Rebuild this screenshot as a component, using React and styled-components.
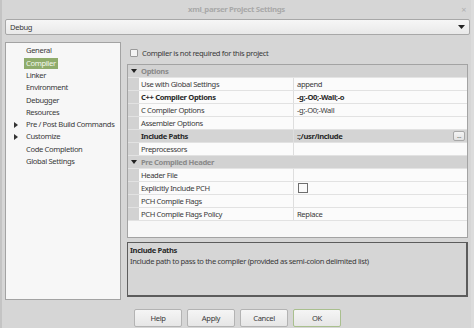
import React from "react";
import styled, { createGlobalStyle } from "styled-components";

const GlobalStyle = createGlobalStyle`
  html, body {
    margin: 0;
    padding: 0;
    background: #dcdcdc;
  }
  * {
    box-sizing: border-box;
  }
`;

const sideItems = [
  { label: "General" },
  { label: "Compiler", selected: true },
  { label: "Linker" },
  { label: "Environment" },
  { label: "Debugger" },
  { label: "Resources" },
  { label: "Pre / Post Build Commands", arrow: true },
  { label: "Customize", arrow: true },
  { label: "Code Completion" },
  { label: "Global Settings" },
];

const groups = [
  {
    title: "Options",
    rows: [
      { name: "Use with Global Settings", value: "append" },
      { name: "C++ Compiler Options", value: "-g;-O0;-Wall;-o", bold: true },
      { name: "C Compiler Options", value: "-g;-O0;-Wall" },
      { name: "Assembler Options", value: "" },
      { name: "Include Paths", value: ":;/usr/include", bold: true, selected: true, more: true },
      { name: "Preprocessors", value: "" },
    ],
  },
  {
    title: "Pre Compiled Header",
    rows: [
      { name: "Header File", value: "" },
      { name: "Explicitly Include PCH", check: true },
      { name: "PCH Compile Flags", value: "" },
      { name: "PCH Compile Flags Policy", value: "Replace" },
    ],
  },
];

function App() {
  return (
    <>
      <GlobalStyle />
      <Window>
        <TitleBar>
          <Title>xml_parser Project Settings</Title>
          <Close>×</Close>
        </TitleBar>
        <Select>
          <span>Debug</span>
          <svg width="7" height="4" viewBox="0 0 7 4">
            <path d="M0 0 L7 0 L3.5 4 Z" fill="#222" />
          </svg>
        </Select>
        <Body>
          <Sidebar>
            {sideItems.map((item) => (
              <SideItem key={item.label}>
                <Arrow>
                  {item.arrow && (
                    <svg width="4" height="6" viewBox="0 0 4 6">
                      <path d="M0 0 L4 3 L0 6 Z" fill="#333" />
                    </svg>
                  )}
                </Arrow>
                <SideLabel $selected={item.selected}>{item.label}</SideLabel>
              </SideItem>
            ))}
          </Sidebar>
          <Main>
            <CheckRow>
              <CheckBox />
              <span>Compiler is not required for this project</span>
            </CheckRow>
            <Grid>
              {groups.map((g) => (
                <React.Fragment key={g.title}>
                  <Category>
                    <CatArrow>
                      <svg width="6" height="4" viewBox="0 0 6 4">
                        <path d="M0 0 L6 0 L3 4 Z" fill="#222" />
                      </svg>
                    </CatArrow>
                    {g.title}
                  </Category>
                  {g.rows.map((r) => (
                    <Row key={r.name} $selected={r.selected}>
                      <Gutter />
                      <NameCell $bold={r.bold}>{r.name}</NameCell>
                      <ValueCell $bold={r.bold}>
                        {r.check ? <SmallCheck /> : <span>{r.value}</span>}
                        {r.more && <MoreBtn>...</MoreBtn>}
                      </ValueCell>
                    </Row>
                  ))}
                </React.Fragment>
              ))}
            </Grid>
            <Desc>
              <DescTitle>Include Paths</DescTitle>
              <DescText>
                Include path to pass to the compiler (provided as semi-colon delimited list)
              </DescText>
            </Desc>
          </Main>
        </Body>
        <Buttons>
          <Button>Help</Button>
          <Button>Apply</Button>
          <Button>Cancel</Button>
          <Button $primary>OK</Button>
        </Buttons>
      </Window>
    </>
  );
}

export default App;

const Window = styled.div`
  width: 471px;
  height: 328px;
  background: #d6d6d6;
  border-left: 2px solid #c4c4c4;
  font-family: "Noto Sans", "DejaVu Sans", sans-serif;
  font-size: 7.6px;
  letter-spacing: -0.35px;
  color: #3a3a3a;
  display: flex;
  flex-direction: column;
  overflow: hidden;
`;

const TitleBar = styled.div`
  height: 17px;
  display: flex;
  align-items: center;
  justify-content: center;
  position: relative;
`;

const Title = styled.div`
  color: #a9a9a9;
  font-weight: bold;
  font-size: 7.8px;
`;

const Close = styled.div`
  position: absolute;
  right: 5px;
  top: 3px;
  color: #b0b0b0;
  font-size: 9px;
`;

const Select = styled.div`
  margin: 2px 1px 0 3px;
  height: 16px;
  border: 1px solid #a8a8a8;
  border-radius: 2px;
  background: linear-gradient(#f6f6f6, #e9e9e9);
  display: flex;
  align-items: center;
  justify-content: space-between;
  padding: 0 4px 0 4px;
`;

const Body = styled.div`
  margin-top: 7px;
  height: 258px;
  display: flex;
  padding-left: 3px;
  gap: 6px;
`;

const Sidebar = styled.div`
  width: 116px;
  height: 258px;
  background: #f7f7f7;
  border: 1px solid #a3a3a3;
  padding-top: 2px;
`;

const SideItem = styled.div`
  height: 12.3px;
  display: flex;
  align-items: center;
`;

const Arrow = styled.div`
  width: 18px;
  padding-left: 8px;
  display: flex;
  align-items: center;
`;

const SideLabel = styled.div`
  padding: 1px 2px;
  line-height: 9.5px;
  background: ${(p) => (p.$selected ? "#8fac6c" : "transparent")};
  color: ${(p) => (p.$selected ? "#f4f8ee" : "#3a3a3a")};
`;

const Main = styled.div`
  width: 341px;
  display: flex;
  flex-direction: column;
`;

const CheckRow = styled.div`
  height: 22px;
  display: flex;
  align-items: center;
  gap: 4px;
  padding-left: 3px;
`;

const CheckBox = styled.div`
  width: 8px;
  height: 8px;
  border: 1px solid #9a9a9a;
  background: #f4f4f4;
  border-radius: 1px;
`;

const Grid = styled.div`
  height: 174px;
  border: 1px solid #a3a3a3;
  background: #f8f8f8;
`;

const Category = styled.div`
  height: 13px;
  display: flex;
  align-items: center;
  background: #d2d2d2;
  color: #8a8a8a;
  font-weight: bold;
  border-bottom: 1px solid #e4e4e4;
`;

const CatArrow = styled.div`
  width: 13px;
  padding-left: 3px;
  display: flex;
  align-items: center;
`;

const Row = styled.div`
  height: 13px;
  display: flex;
  background: ${(p) => (p.$selected ? "#d4d4d4" : "#fbfbfb")};
  border-bottom: 1px solid #e2e2e2;
`;

const Gutter = styled.div`
  width: 11px;
  background: #d2d2d2;
`;

const NameCell = styled.div`
  width: 155px;
  padding-left: 2px;
  display: flex;
  align-items: center;
  font-weight: ${(p) => (p.$bold ? "bold" : "normal")};
  color: ${(p) => (p.$bold ? "#2a2a2a" : "#3a3a3a")};
  border-right: 1px solid #dedede;
`;

const ValueCell = styled.div`
  flex: 1;
  padding-left: 3px;
  padding-right: 2px;
  display: flex;
  align-items: center;
  justify-content: space-between;
  font-weight: ${(p) => (p.$bold ? "bold" : "normal")};
  color: ${(p) => (p.$bold ? "#2a2a2a" : "#3a3a3a")};
`;

const SmallCheck = styled.div`
  width: 10px;
  height: 10px;
  margin-left: 1px;
  border: 1px solid #6e6e6e;
  background: #fafafa;
`;

const MoreBtn = styled.div`
  width: 12px;
  height: 10px;
  border: 1px solid #a8a8a8;
  border-radius: 2px;
  background: linear-gradient(#f4f4f4, #e2e2e2);
  font-size: 6px;
  color: #777;
  display: flex;
  align-items: center;
  justify-content: center;
  line-height: 1;
`;

const Desc = styled.div`
  margin-top: 4px;
  height: 55px;
  border: 1px solid #5c5c5c;
  border-bottom-width: 2px;
  border-right-width: 2px;
  padding: 2px 2px;
`;

const DescTitle = styled.div`
  font-weight: bold;
  color: #2a2a2a;
  line-height: 11px;
`;

const DescText = styled.div`
  line-height: 11px;
`;

const Buttons = styled.div`
  margin-top: 9px;
  display: flex;
  gap: 5px;
  padding-left: 132px;
`;

const Button = styled.div`
  width: 48px;
  height: 18px;
  border: 1px solid ${(p) => (p.$primary ? "#a9bf8e" : "#b3b3b3")};
  border-radius: 2px;
  background: linear-gradient(#f5f5f5, #e6e6e6);
  display: flex;
  align-items: center;
  justify-content: center;
  color: #3a3a3a;
`;
